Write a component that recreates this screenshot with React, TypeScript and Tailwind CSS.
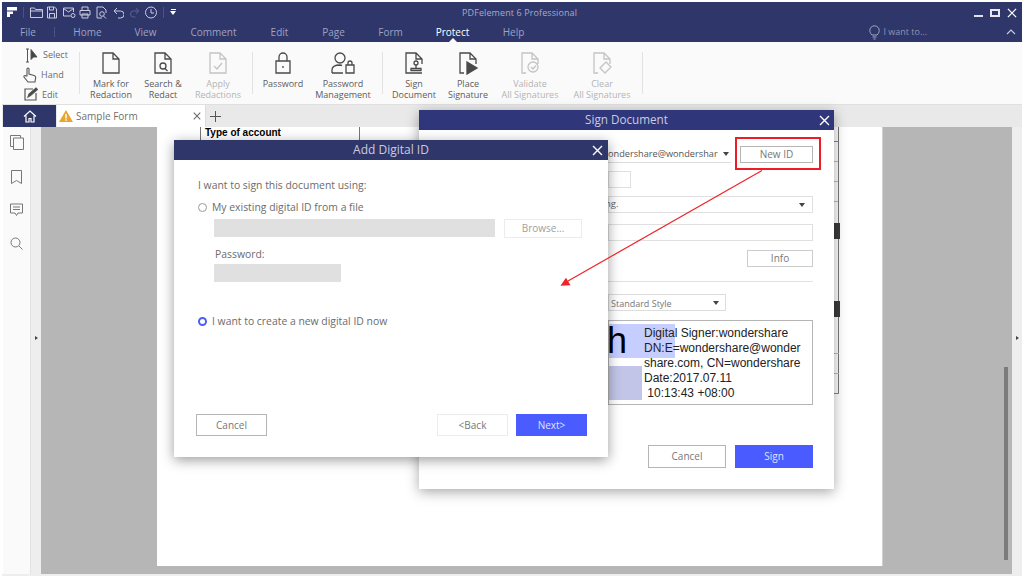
import React from "react";

const DK = "#4a4a4a";
const LT = "#c4c4c4";

function Doc({ c, children, open }: { c: string; children?: React.ReactNode; open?: boolean }) {
  return (
    <svg width="24" height="24" viewBox="0 0 24 24" fill="none" stroke={c} strokeWidth="1.3">
      {open ? (
        <path d="M8 22H4V2h10l6 6v5M14 2v6h6" />
      ) : (
        <path d="M4 2h10l6 6v14H4zM14 2v6h6" />
      )}
      {children}
    </svg>
  );
}

const Sep = () => <div className="w-px h-[42px] bg-[#e2e2e2] mt-[10px] shrink-0" />;

function Tool({ icon, l1, l2, w, dim }: { icon: React.ReactNode; l1: string; l2?: string; w: string; dim?: boolean }) {
  return (
    <div className={`${w} shrink-0 flex flex-col items-center pt-[9px]`}>
      <div className="h-[24px]">{icon}</div>
      <div className={`mt-[3px] text-[9px] leading-[11px] text-center whitespace-nowrap ${dim ? "text-[#b4b4b4]" : "text-[#5c5c5c]"}`}>
        <div>{l1}</div>
        {l2 && <div>{l2}</div>}
      </div>
    </div>
  );
}

function Q({ children, w = 13, cls = "" }: { children: React.ReactNode; w?: number; cls?: string }) {
  return (
    <svg width={w} height="13" viewBox={`0 0 ${w} 13`} fill="none" stroke="#c9cce0" strokeWidth="1" className={`shrink-0 ${cls}`}>
      {children}
    </svg>
  );
}

function Nav({ t, w, active }: { t: string; w: string; active?: boolean }) {
  return (
    <div className={`${w} shrink-0 text-center relative ${active ? "text-white" : "text-[#9da3c4]"}`}>
      {t}
      {active && <div className="absolute left-1/2 -translate-x-1/2 top-[15px] w-0 h-0 border-x-[4px] border-x-transparent border-b-[4px] border-b-[#fafafa]" />}
    </div>
  );
}

const X = ({ s = 11, c = "white" }: { s?: number; c?: string }) => (
  <svg width={s} height={s} viewBox="0 0 11 11" stroke={c} strokeWidth="1.4" className="shrink-0">
    <path d="M1 1l9 9M10 1l-9 9" />
  </svg>
);

const Caret = () => <div className="w-0 h-0 border-x-[3.5px] border-x-transparent border-t-[4px] border-t-[#444]" />;

function Btn({ t, cls }: { t: string; cls: string }) {
  return <div className={`h-[22px] flex items-center justify-center text-[10px] ${cls}`}>{t}</div>;
}

export default function App() {
  return (
    <div className="relative w-[1024px] h-[576px] overflow-hidden bg-white pl-[2px] pr-[2px] pt-[2px] text-[#666] font-['Open_Sans','Noto_Sans',sans-serif]">
      <div className="flex flex-col h-full">
        {/* Title */}
        <div className="h-[20px] bg-[#2f3669] flex items-center shrink-0 relative">
          <div className="ml-[5px] w-[10px] h-[10px] shrink-0">
            <svg width="10" height="10" viewBox="0 0 10 10" fill="white"><path d="M0 0h10v3.5H0zM0 4.5h6V7H3v3H0z" /></svg>
          </div>
          <div className="ml-[6px] w-px h-[11px] bg-[#4c5284]" />
          <div className="ml-[6px] flex items-center">
            <Q w={13}><path d="M.5 11.5V2h4l1 1.5h7v8zM.5 5h12" /></Q>
            <Q w={10} cls="ml-[4px]"><path d="M.5 1h7l2 2v9H.5zM2.500 1v3h4V1M2.500 12V7.500h5V12" /></Q>
            <Q w={13} cls="ml-[6px]"><path d="M.5 2h10v4M.5 2v8h7M.5 2.500L5.500 6l5-3.500" /><circle cx="10" cy="9.500" r="2" /></Q>
            <Q w={12} cls="ml-[3px]"><path d="M3 4V1h6v3M1 4.500h10V9H1zM3 8h6v4H3z" /></Q>
            <Q w={11} cls="ml-[5px]"><path d="M7 1H1v11h5M7 1l3 3v3" /><circle cx="6" cy="8" r="2.300" /><path d="M7.500 10l2.500 2.500" /></Q>
            <Q w={11} cls="ml-[6px]"><path d="M1 5h6.500a3.200 3.200 0 010 7H5M1 5l3-3M1 5l3 3" /></Q>
            <div className="opacity-30 ml-[6px]"><Q w={9}><path d="M8.500 5H3.500a3 3 0 000 6h2M8.500 5L6 2M8.500 5L6 8" /></Q></div>
            <Q w={12} cls="ml-[6px]"><circle cx="6" cy="6.500" r="5.500" /><path d="M6 3v4h3" /></Q>
          </div>
          <div className="ml-[6px] w-px h-[11px] bg-[#4c5284]" />
          <div className="ml-[6px] flex flex-col items-center gap-[1px]">
            <div className="w-[5px] h-[1px] bg-white" />
            <div className="w-0 h-0 border-x-[3px] border-x-transparent border-t-[4px] border-t-white" />
          </div>
          <div className="absolute left-[460px] top-[4px] text-[9px] leading-[13px] text-[#a6abc8] tracking-[0.1px]">PDFelement 6 Professional</div>
          <div className="ml-auto flex items-end gap-[7px] mr-[5px] pt-[1px]">
            <div className="w-[9px] h-[2px] bg-[#dfe1ec] mb-[1px]" />
            <div className="w-[10px] h-[8px] border-2 border-t-[2px] border-[#e8e9f0] mb-[1px]" />
            <X s={10} />
          </div>
        </div>
        {/* Nav */}
        <div className="h-[20px] bg-[#2f3669] shrink-0 flex items-center text-[10px] leading-[18px] relative">
          <Nav t="File" w="w-[52px]" />
          <div className="w-px h-[10px] bg-[#4c5284] shrink-0 mr-[2px]" />
          <Nav t="Home" w="w-[61px]" />
          <Nav t="View" w="w-[55px]" />
          <Nav t="Comment" w="w-[81px]" />
          <Nav t="Edit" w="w-[51px]" />
          <Nav t="Page" w="w-[57px]" />
          <Nav t="Form" w="w-[57px]" />
          <Nav t="Protect" w="w-[67px]" active />
          <Nav t="Help" w="w-[55px]" />
          <div className="ml-auto flex items-center mr-[6px]">
            <svg width="11" height="15" viewBox="0 0 11 15" fill="none" stroke="#a6abc8" strokeWidth="1"><path d="M3 10C1 8 .8 6.500.8 5.500a4.700 4.700 0 019.400 0c0 1-.2 2.500-2.200 4.500zM3.500 12h4M4.500 14h2" /></svg>
            <span className="ml-[3px] text-[9px] text-[#8f95b8]">I want to...</span>
            <svg width="10" height="6" viewBox="0 0 10 6" fill="none" stroke="#c9cce0" strokeWidth="1.100" className="ml-[79px]"><path d="M1 5l4-4 4 4" /></svg>
          </div>
        </div>
        {/* Ribbon */}
        <div className="h-[63px] bg-[#fafafa] shrink-0 flex border-b border-[#e0e0e0]">
          <div className="w-[77px] shrink-0 flex flex-col pt-[4px] text-[9px] text-[#6a6a6a]">
            <div className="h-[19px] flex items-center pl-[23px] gap-[5px]">
              <svg width="13" height="15" viewBox="0 0 13 15" fill="none" stroke="#555"><path d="M1 1h3M1 14h3M2.500 1v13" /><path d="M6 1.500v10l2.500-2.500h3.500z" fill="#444" /></svg>
              Select
            </div>
            <div className="h-[22px] flex items-center pl-[21px] gap-[4px]">
              <svg width="14" height="16" viewBox="0 0 14 16" fill="none" stroke="#555" strokeWidth="1.100"><path d="M4 9V2a1 1 0 012 0v5l5 1.500c1.500.5 2 1.500 1.500 3L12 15H5L1 10c-.5-1 1-2 2-1z" /></svg>
              Hand
            </div>
            <div className="h-[20px] flex items-center pl-[22px] gap-[4px]">
              <svg width="14" height="14" viewBox="0 0 14 14" fill="none" stroke="#555" strokeWidth="1.200"><path d="M9 2H1v11h11V6" /><path d="M4 10l1-3 7-6 1.500 1.500-7 6z" fill="#444" /></svg>
              Edit
            </div>
          </div>
          <Sep />
          <div className="w-[6px] shrink-0" />
          <Tool w="w-[50px]" l1="Mark for" l2="Redaction" icon={<Doc c={DK} />} />
          <Tool w="w-[54px]" l1="Search &" l2="Redact" icon={<Doc c={DK}><circle cx="12" cy="15" r="3" /><path d="M14 17.500l2.500 2.500" /></Doc>} />
          <Tool w="w-[56px]" l1="Apply" l2="Redactions" dim icon={<Doc c={LT}><path d="M8 15l3 3 5-6" /></Doc>} />
          <div className="w-[6px] shrink-0" />
          <Sep />
          <div className="w-[5px] shrink-0" />
          <Tool w="w-[50px]" l1="Password" icon={
            <svg width="24" height="24" viewBox="0 0 24 24" fill="none" stroke={DK} strokeWidth="1.300"><path d="M5 10h14v12H5zM8 10V6a4 4 0 018 0v4M12 15v2" /></svg>
          } />
          <Tool w="w-[70px]" l1="Password" l2="Management" icon={
            <svg width="24" height="24" viewBox="0 0 24 24" fill="none" stroke={DK} strokeWidth="1.300"><circle cx="9" cy="7" r="5" /><path d="M1 22v-3c0-3 3-5 8-5l2 .5M1 22h11M15 14h8v8h-8zM17 14v-2a2 2 0 014 0v2" /></svg>
          } />
          <div className="w-[4px] shrink-0" />
          <Sep />
          <div className="w-[6px] shrink-0" />
          <Tool w="w-[50px]" l1="Sign" l2="Document" icon={<Doc c={DK} open><circle cx="14" cy="12" r="2" /><path d="M14 14v3M9 17.500h10v2H9zM8 22h12" /></Doc>} />
          <Tool w="w-[58px]" l1="Place" l2="Signature" icon={<Doc c={DK} open><path d="M11 11l10 6-10 6z" fill={DK} /></Doc>} />
          <Tool w="w-[66px]" l1="Validate" l2="All Signatures" dim icon={<Doc c={LT} open><circle cx="15" cy="16" r="5" /><path d="M13 16l2 2 3-3.500" /></Doc>} />
          <Tool w="w-[78px]" l1="Clear" l2="All Signatures" dim icon={<Doc c={LT} open><path d="M10 17l6-6 5 5-6 6z" /></Doc>} />
          <div className="w-[1px] shrink-0" />
          <Sep />
        </div>
        {/* Tabs */}
        <div className="h-[22px] bg-[#e9e9e9] shrink-0 flex items-stretch pl-[1px]">
          <div className="w-[53px] bg-[#2f3669] flex items-center justify-center">
            <svg width="14" height="13" viewBox="0 0 14 13" fill="none" stroke="white" strokeWidth="1.200"><path d="M1 6.500L7 1l6 5.500M3 5.500V12h3V8.500h2V12h3V5.500" /></svg>
          </div>
          <div className="w-[149px] bg-white ml-px flex items-center pl-[2px] pr-[4px] border-r border-[#ddd]">
            <svg width="14" height="12" viewBox="0 0 14 12"><path d="M7 0l7 12H0z" fill="#e8a62c" /><path d="M6.300 4h1.400v4.500H6.300zM6.300 9.300h1.400v1.400H6.300z" fill="white" /></svg>
            <span className="ml-[3px] text-[10px] text-[#707070] pt-[1px]">Sample Form</span>
            <div className="ml-auto"><X s={8} c="#666" /></div>
          </div>
          <div className="ml-[4px] flex items-center">
            <svg width="11" height="11" viewBox="0 0 11 11" stroke="#555"><path d="M5.500 0v11M0 5.500h11" /></svg>
          </div>
        </div>
        {/* Main */}
        <div className="flex-1 flex min-h-0 pl-[1px]">
          <div className="w-[27px] bg-[#fafafa] shrink-0 flex flex-col items-center pt-[8px] gap-[19.5px]">
            <svg width="14" height="15" viewBox="0 0 14 15" fill="none" stroke="#777"><path d="M3.500 3h10v11.500h-10zM3.500 11.500H.5V.5h10V3" /></svg>
            <svg width="11" height="14" viewBox="0 0 11 14" fill="none" stroke="#777"><path d="M.5.5h10v13l-5-3-5 3z" /></svg>
            <svg width="13" height="14" viewBox="0 0 13 14" fill="none" stroke="#777"><path d="M.5 1h12v9H8l-1.500 2.500L5 10H.5zM3 4h7M3 6.500h7" /></svg>
            <svg width="13" height="13" viewBox="0 0 13 13" fill="none" stroke="#777"><circle cx="5.500" cy="5.500" r="4.500" /><path d="M9 9l3.500 3.500" /></svg>
          </div>
          <div className="w-[11px] bg-[#eeeeee] shrink-0 flex items-center justify-center pb-[25px] border-l border-[#e2e2e2]">
            <div className="w-0 h-0 border-y-[2.500px] border-y-transparent border-l-[3px] border-l-[#444]" />
          </div>
          <div className="flex-1 flex flex-col min-w-0">
            <div className="flex-1 bg-[#b6b6b6] pl-[116px] pb-[8px] flex relative">
              <div className="w-[726px] bg-white border-r border-[#cfcfcf] relative">
                <div className="ml-[43px] w-[160px] h-[14px] border-x border-[#777] text-[10px] leading-[11px] pl-[4px] text-black font-['Liberation_Sans',sans-serif] font-semibold">Type of account</div>
                <div className="absolute left-[676px] top-0 w-[6px] h-[266px] border-r border-[#777] flex flex-col">
                  <div className="h-[15px] border-b border-[#888]" />
                  <div className="h-[20px] border-b border-[#bbb]" />
                  <div className="h-[20px] border-b border-[#bbb]" />
                  <div className="h-[20px] border-b border-[#bbb]" />
                </div>
                <div className="absolute left-[676px] top-[96px] w-[7px] h-[16px] bg-[#3b3b3b]" />
                <div className="absolute left-[676px] top-[174px] w-[7px] h-[16px] bg-[#3b3b3b]" />
                <div className="absolute left-[676px] top-[226px] w-[6px] h-px bg-[#bbb]" />
                <div className="absolute left-[676px] top-[246px] w-[6px] h-px bg-[#bbb]" />
                <div className="absolute left-[676px] top-[266px] w-[6px] h-px bg-[#888]" />
              </div>
              <div className="absolute right-[4px] top-[240px] w-[4px] h-[193px] bg-[#7b7b7b]" />
            </div>
          </div>
          <div className="w-[10px] bg-[#eeeeee] shrink-0 flex items-center justify-center pb-[25px]">
            <div className="w-0 h-0 border-y-[2.500px] border-y-transparent border-l-[3px] border-l-[#444]" />
          </div>
        </div>
        <div className="h-[2px] bg-[#eeeeee] shrink-0" />
      </div>

      {/* Sign Document dialog */}
      <div className="absolute left-[419px] top-[110px] w-[415px] h-[379px] bg-white shadow-[0_3px_12px_rgba(0,0,0,0.35)] flex flex-col">
        <div className="h-[20px] bg-[#2f3679] flex items-center justify-center relative text-[#c9cce0] text-[11.7px]">
          Sign Document
          <div className="absolute right-[4px] top-[5px]"><X /></div>
        </div>
        <div className="pl-[189px] pr-[21px] flex flex-col text-[9px]">
          <div className="mt-[16px] h-[17px] flex items-center">
            <div className="w-[123px] flex items-center border-b border-[#ddd] h-full">
              <span className="whitespace-nowrap w-[115px] shrink-0 text-[9.200px] text-[#555]">ondershare@wondershar</span>
              <Caret />
            </div>
            <Btn t="New ID" cls="ml-[9px] w-[73px] !h-[17px] border border-[#b5b5b5] text-[#777]" />
          </div>
          <div className="mt-[8px] w-[23px] h-[17px] border border-[#e0e0e0]" />
          <div className="mt-[8px] h-[17px] border border-[#e0e0e0] flex items-center justify-between pr-[7px] text-[9.500px]"><span className="-ml-[4px]">ng.</span><Caret /></div>
          <div className="mt-[11px] h-[17px] border border-[#e0e0e0]" />
          <Btn t="Info" cls="mt-[9px] self-end w-[66px] !h-[17px] border border-[#ccc] text-[#777]" />
          <div className="mt-[14px] h-px bg-[#e2e2e2]" />
          <div className="mt-[12px] w-[118px] h-[17px] border border-[#ddd] flex items-center justify-between pl-[2px] pr-[6px] text-[9px] text-[#777] leading-[15px]"><span className="pt-[2px]">Standard Style</span><Caret /></div>
          <div className="mt-[9px] h-[85px] border border-[#b5b5b5] relative font-['Liberation_Sans',sans-serif] text-[#222]">
            <div className="absolute left-0 top-[3px] w-[66px] h-[34px] bg-[#c6cdff]" />
            <div className="absolute left-0 top-[45px] w-[33px] h-[34px] bg-[#c2c5e8]" />
            <div className="absolute -left-[2px] top-0 text-[36px] leading-[40px] text-black">h</div>
            <div className="absolute left-[35px] top-[5px] text-[12px] leading-[15px] whitespace-pre">
              {"Digital Signer:wondershare\nDN:E=wondershare@wonder\nshare.com, CN=wondershare\nDate:2017.07.11\n 10:13:43 +08:00"}
            </div>
          </div>
          <div className="mt-[40px] flex justify-end gap-[9px]">
            <Btn t="Cancel" cls="w-[78px] !h-[23px] border border-[#b5b5b5] text-[#777]" />
            <Btn t="Sign" cls="w-[78px] !h-[23px] bg-[#4a5cff] text-[#dfe2ff]" />
          </div>
        </div>
      </div>

      {/* Add Digital ID dialog */}
      <div className="absolute left-[174px] top-[140px] w-[434px] h-[317px] bg-white shadow-[0_3px_12px_rgba(0,0,0,0.4)] flex flex-col text-[10.400px] text-[#6c6c6c]">
        <div className="h-[20px] bg-[#2f3669] flex items-center justify-center relative text-[#c9cce0] text-[12px] shrink-0">
          Add Digital ID
          <div className="absolute right-[5px] top-[5px]"><X /></div>
        </div>
        <div className="flex-1 flex flex-col pl-[24px] pr-[21px] pb-[21px]">
          <div className="mt-[18px] leading-[14px]">I want to sign this document using:</div>
          <div className="mt-[8px] flex items-center gap-[5px] leading-[14px]">
            <div className="w-[9px] h-[9px] rounded-full border border-[#999]" />
            My existing digital ID from a file
          </div>
          <div className="mt-[4px] ml-[16px] flex items-center h-[20px]">
            <div className="w-[281px] h-[18px] bg-[#e0e0e0]" />
            <Btn t="Browse..." cls="ml-[9px] w-[78px] !h-[19px] border border-[#ececec] text-[#a0a0a0]" />
          </div>
          <div className="mt-[9px] ml-[17px] leading-[14px]">Password:</div>
          <div className="mt-[3px] ml-[16px] w-[127px] h-[18px] bg-[#e0e0e0]" />
          <div className="mt-[32px] flex items-center gap-[5px] leading-[14px]">
            <div className="w-[9px] h-[9px] rounded-full border-[2.500px] border-[#4a5cff]" />
            I want to create a new digital ID now
          </div>
          <div className="mt-auto flex -ml-[2px]">
            <Btn t="Cancel" cls="w-[71px] border border-[#b5b5b5] text-[#777]" />
            <Btn t="<Back" cls="ml-auto w-[71px] border border-[#ececec] text-[#777]" />
            <Btn t="Next>" cls="ml-[8px] w-[71px] bg-[#4a5cff] text-[#dfe2ff]" />
          </div>
        </div>
      </div>

      {/* Red annotation */}
      <div className="absolute left-[735px] top-[137px] w-[86px] h-[33px] border-2 border-[#ee1c25]" />
      <svg className="absolute left-0 top-0 pointer-events-none" width="1024" height="576" fill="none">
        <path d="M762 170.500L568 281" stroke="#f0222a" strokeWidth="1.200" />
        <path d="M560.500 285.700l5.500-8 4.500 7.500z" fill="#f0222a" />
      </svg>
    </div>
  );
}
